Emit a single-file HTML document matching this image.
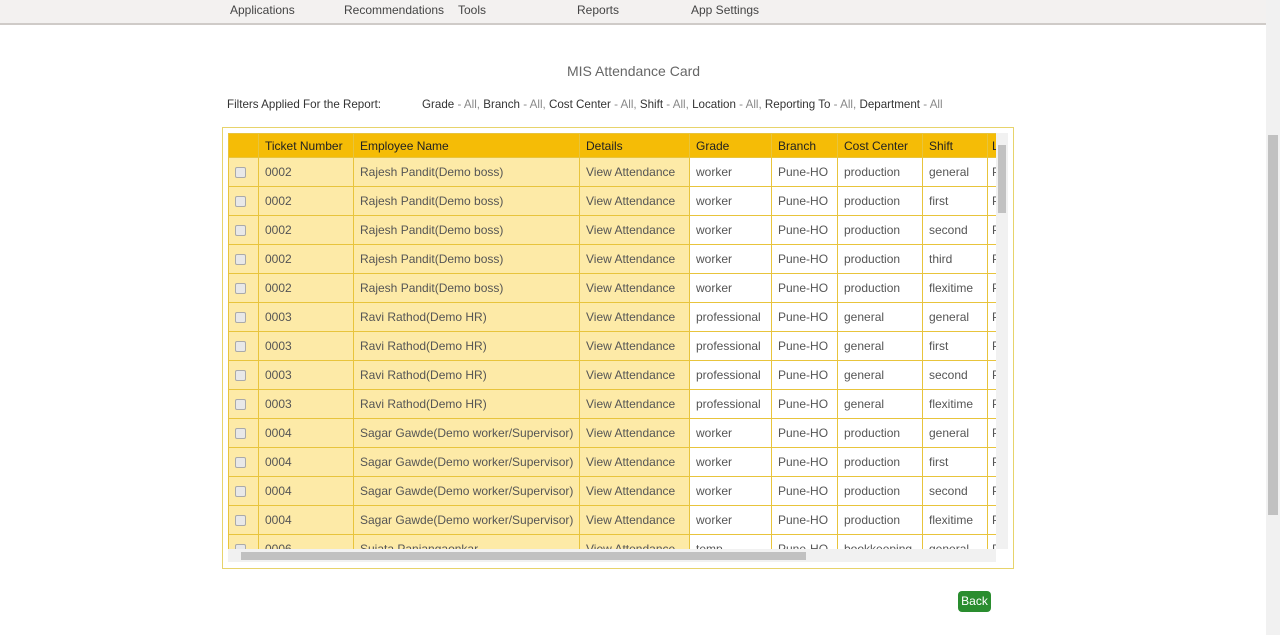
<!DOCTYPE html>
<html><head><meta charset="utf-8"><style>
*{margin:0;padding:0;box-sizing:border-box}
body{width:1280px;height:635px;overflow:hidden;background:#fff;font-family:"Liberation Sans",sans-serif;font-size:12px;color:#555;position:relative}
.nav{position:absolute;left:0;top:0;width:1266px;height:25px;background:#f3f1f0;border-bottom:2px solid #cfcbc8}
.nav span{position:absolute;top:3px;font-size:12px;color:#444}
.title{position:absolute;left:567px;top:63px;font-size:14px;color:#666}
.filt{position:absolute;left:227px;top:98px;font-size:11.6px;color:#333}
.filt i{font-style:normal;color:#888}
.box{position:absolute;left:222px;top:127px;width:792px;height:442px;border:1px solid #e7d36b}
.vp{position:absolute;left:228px;top:133px;width:768px;height:416px;overflow:hidden}
table{border-collapse:collapse;table-layout:fixed;width:800px}
td,th{border:1px solid #e8c43c;height:29px;padding:0 6px;text-align:left;white-space:nowrap;overflow:hidden;font-weight:normal}
th{background:#f5bc06;height:24px;color:#222}
td{background:#fff}
td.y{background:#fdeaa7}
td.l,th.l{padding-left:4px}
.cb{display:inline-block;width:11px;height:11px;border:1px solid #aaa;border-radius:2px;background:#e8e8e8;vertical-align:middle}
.vs{position:absolute;left:996px;top:133px;width:12px;height:416px;background:#f1f1f1}
.vs b{position:absolute;left:2px;top:12px;width:8px;height:68px;background:#c1c1c1}
.hs{position:absolute;left:228px;top:549px;width:768px;height:13px;background:#f1f1f1}
.hs b{position:absolute;left:13px;top:3px;width:565px;height:8px;background:#c1c1c1}
.ps{position:absolute;left:1266px;top:0;width:14px;height:635px;background:#f1f1f1}
.ps b{position:absolute;left:2px;top:135px;width:10px;height:380px;background:#c1c1c1}
.back{position:absolute;left:958px;top:591px;width:33px;height:21px;background:#2a8d2f;border-radius:4px;color:#fff;font-size:12px;text-align:center;line-height:21px}
</style></head><body>
<div class="nav"><span style="left:230px">Applications</span><span style="left:344px">Recommendations</span><span style="left:458px">Tools</span><span style="left:577px">Reports</span><span style="left:691px">App Settings</span></div>
<div class="title">MIS Attendance Card</div>
<div class="filt">Filters Applied For the Report:<span style="position:absolute;left:195px;white-space:nowrap">Grade <i>- All,</i> Branch <i>- All,</i> Cost Center <i>- All,</i> Shift <i>- All,</i> Location <i>- All,</i> Reporting To <i>- All,</i> Department <i>- All</i></span></div>
<div class="box"></div>
<div class="vp"><table>
<colgroup><col style="width:30px"><col style="width:95px"><col style="width:226px"><col style="width:110px"><col style="width:82px"><col style="width:66px"><col style="width:85px"><col style="width:65px"><col style="width:41px"></colgroup>
<tr><th></th><th>Ticket Number</th><th>Employee Name</th><th>Details</th><th>Grade</th><th>Branch</th><th>Cost Center</th><th>Shift</th><th class="l">L</th></tr>
<tr><td class="y"><span class="cb"></span></td><td class="y">0002</td><td class="y">Rajesh Pandit(Demo boss)</td><td class="y">View Attendance</td><td>worker</td><td>Pune-HO</td><td>production</td><td>general</td><td class="l">P</td></tr>
<tr><td class="y"><span class="cb"></span></td><td class="y">0002</td><td class="y">Rajesh Pandit(Demo boss)</td><td class="y">View Attendance</td><td>worker</td><td>Pune-HO</td><td>production</td><td>first</td><td class="l">P</td></tr>
<tr><td class="y"><span class="cb"></span></td><td class="y">0002</td><td class="y">Rajesh Pandit(Demo boss)</td><td class="y">View Attendance</td><td>worker</td><td>Pune-HO</td><td>production</td><td>second</td><td class="l">P</td></tr>
<tr><td class="y"><span class="cb"></span></td><td class="y">0002</td><td class="y">Rajesh Pandit(Demo boss)</td><td class="y">View Attendance</td><td>worker</td><td>Pune-HO</td><td>production</td><td>third</td><td class="l">P</td></tr>
<tr><td class="y"><span class="cb"></span></td><td class="y">0002</td><td class="y">Rajesh Pandit(Demo boss)</td><td class="y">View Attendance</td><td>worker</td><td>Pune-HO</td><td>production</td><td>flexitime</td><td class="l">P</td></tr>
<tr><td class="y"><span class="cb"></span></td><td class="y">0003</td><td class="y">Ravi Rathod(Demo HR)</td><td class="y">View Attendance</td><td>professional</td><td>Pune-HO</td><td>general</td><td>general</td><td class="l">P</td></tr>
<tr><td class="y"><span class="cb"></span></td><td class="y">0003</td><td class="y">Ravi Rathod(Demo HR)</td><td class="y">View Attendance</td><td>professional</td><td>Pune-HO</td><td>general</td><td>first</td><td class="l">P</td></tr>
<tr><td class="y"><span class="cb"></span></td><td class="y">0003</td><td class="y">Ravi Rathod(Demo HR)</td><td class="y">View Attendance</td><td>professional</td><td>Pune-HO</td><td>general</td><td>second</td><td class="l">P</td></tr>
<tr><td class="y"><span class="cb"></span></td><td class="y">0003</td><td class="y">Ravi Rathod(Demo HR)</td><td class="y">View Attendance</td><td>professional</td><td>Pune-HO</td><td>general</td><td>flexitime</td><td class="l">P</td></tr>
<tr><td class="y"><span class="cb"></span></td><td class="y">0004</td><td class="y">Sagar Gawde(Demo worker/Supervisor)</td><td class="y">View Attendance</td><td>worker</td><td>Pune-HO</td><td>production</td><td>general</td><td class="l">P</td></tr>
<tr><td class="y"><span class="cb"></span></td><td class="y">0004</td><td class="y">Sagar Gawde(Demo worker/Supervisor)</td><td class="y">View Attendance</td><td>worker</td><td>Pune-HO</td><td>production</td><td>first</td><td class="l">P</td></tr>
<tr><td class="y"><span class="cb"></span></td><td class="y">0004</td><td class="y">Sagar Gawde(Demo worker/Supervisor)</td><td class="y">View Attendance</td><td>worker</td><td>Pune-HO</td><td>production</td><td>second</td><td class="l">P</td></tr>
<tr><td class="y"><span class="cb"></span></td><td class="y">0004</td><td class="y">Sagar Gawde(Demo worker/Supervisor)</td><td class="y">View Attendance</td><td>worker</td><td>Pune-HO</td><td>production</td><td>flexitime</td><td class="l">P</td></tr>
<tr><td class="y"><span class="cb"></span></td><td class="y">0006</td><td class="y">Sujata Panjangaonkar</td><td class="y">View Attendance</td><td>temp</td><td>Pune-HO</td><td>bookkeeping</td><td>general</td><td class="l">P</td></tr>
</table></div>
<div class="vs"><b></b></div>
<div class="hs"><b></b></div>
<div class="ps"><b></b></div>
<div class="back">Back</div>
</body></html>
